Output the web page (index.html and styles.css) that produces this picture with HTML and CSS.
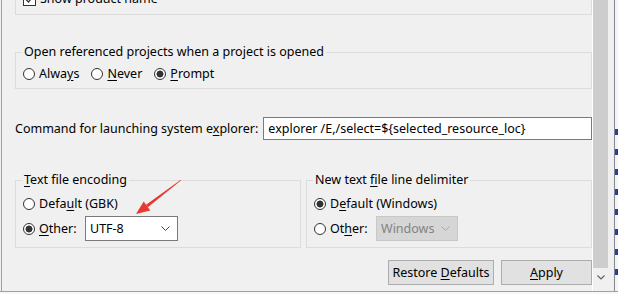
FILE: index.html
```html
<!DOCTYPE html>
<html lang="en">
<head>
    <meta charset="UTF-8">
    <meta name="viewport" content="width=device-width, initial-scale=1.0">
    <title>Workspace Preferences</title>
    <link rel="stylesheet" href="styles.css">
</head>
<body>

    <div class="window">
        <!-- Preference page -->
        <div class="panel">

            <div class="group group-cut">
                <label class="check-row"><span class="checkbox"><svg width="11" height="11" viewBox="0 0 11 11"><polyline points="2,5.5 4.5,8 9,2.5" fill="none" stroke="#333" stroke-width="1.3"/></svg></span><span>Show product name</span></label>
            </div>

            <fieldset class="group refs">
                <legend>Open referenced projects when a project is opened</legend>
                <div class="radio-row">
                    <label class="radio"><span class="circle"></span><span>Alwa<u>y</u>s</span></label>
                    <label class="radio"><span class="circle"></span><span><u>N</u>ever</span></label>
                    <label class="radio"><span class="circle checked"></span><span><u>P</u>rompt</span></label>
                </div>
            </fieldset>

            <div class="command-row">
                <label class="command-label">Command for launching system e<u>x</u>plorer:</label>
                <div class="textbox">explorer /E,/select=${selected_resource_loc}</div>
            </div>

            <div class="group-pair">
                <fieldset class="group">
                    <legend><u>T</u>ext file encoding</legend>
                    <div class="options">
                        <label class="radio"><span class="circle"></span><span>Defa<u>u</u>lt (GBK)</span></label>
                        <div class="other-row">
                            <label class="radio"><span class="circle checked"></span><span><u>O</u>ther:</span></label>
                            <div class="combo">UTF-8<svg class="chev" width="9" height="5" viewBox="0 0 9 5"><polyline points="0.5,0.5 4.5,4.5 8.5,0.5" fill="none" stroke="#444" stroke-width="1"/></svg></div>
                        </div>
                    </div>
                </fieldset>

                <fieldset class="group">
                    <legend>New text <u>f</u>ile line delimiter</legend>
                    <div class="options">
                        <label class="radio"><span class="circle checked"></span><span>D<u>e</u>fault (Windows)</span></label>
                        <div class="other-row">
                            <label class="radio"><span class="circle"></span><span>Ot<u>h</u>er:</span></label>
                            <div class="combo disabled">Windows<svg class="chev" width="9" height="5" viewBox="0 0 9 5"><polyline points="0.5,0.5 4.5,4.5 8.5,0.5" fill="none" stroke="#a8a8a8" stroke-width="1"/></svg></div>
                        </div>
                    </div>
                </fieldset>
            </div>

            <div class="buttons">
                <button class="btn restore">Restore <u>D</u>efaults</button>
                <button class="btn apply"><u>A</u>pply</button>
            </div>
        </div>

        <!-- Scroll bar -->
        <div class="scrollbar">
            <div class="thumb"></div>
            <div class="scroll-arrow"><svg width="8" height="5" viewBox="0 0 8 5"><polyline points="0.5,0.5 4,4 7.5,0.5" fill="none" stroke="#606060" stroke-width="1.2"/></svg></div>
        </div>
        <div class="gutter"></div>
        <div class="side"><div class="side-icons"></div></div>
    </div>

    <!-- Red annotation arrow -->
    <svg class="annotation" width="618" height="294" viewBox="0 0 618 294">
        <polygon points="181.2,180.2 180.8,179.8 146.1,204.8 147.9,207.2" fill="#e8382f"/>
        <polygon points="136,214 150.3,210.4 143.7,201.6" fill="#e8382f"/>
    </svg>

</body>
</html>
```

FILE: styles.css
```css
/* Reset */
* {
    box-sizing: border-box;
}

body {
    margin: 0;
    width: 618px;
    height: 294px;
    overflow: hidden;
    background-color: #f7f7f7;
    font-family: "Noto Sans", "Open Sans", sans-serif;
    font-size: 12.5px;
    line-height: 16px;
    color: #000;
}

u {
    text-underline-offset: 2px;
}

/* Outer frame */
.window {
    display: flex;
    height: 292px;
    background-color: #f0f0f0;
    border-bottom: 1px solid #a0a0a0;
}

.panel {
    width: 591px;
    flex-shrink: 0;
    margin-left: 1px;
    border-left: 1px solid #a0a0a0;
    padding-left: 13px;
    display: flex;
    flex-direction: column;
}

/* Group boxes */
.group {
    margin: 0;
    padding: 6px 7px 7px;
    border: 1px solid #dcdcdc;
    min-width: 0;
}

.group legend {
    padding: 0 2px;
    margin-left: -1px;
    line-height: 16px;
}

.group-cut {
    height: 15px;
    padding: 0 7px;
    border-top: none;
    overflow: hidden;
}

.check-row {
    display: flex;
    align-items: center;
    gap: 4px;
    height: 16px;
    margin-top: -9px;
}

.checkbox {
    width: 13px;
    height: 13px;
    border: 1px solid #333;
    background-color: #fff;
    display: flex;
    align-items: center;
    justify-content: center;
}

.refs {
    margin-top: 29px;
    padding-bottom: 6px;
}

.radio-row {
    display: flex;
    gap: 12px;
}

.radio {
    display: inline-flex;
    align-items: center;
    gap: 4px;
    height: 16px;
    white-space: nowrap;
}

.circle {
    width: 12px;
    height: 12px;
    border: 1px solid #333;
    border-radius: 50%;
    background-color: #fff;
}

.circle.checked {
    background: radial-gradient(circle, #333 0 3.2px, #fff 3.8px);
}

/* Command row */
.command-row {
    margin-top: 28px;
    display: flex;
    align-items: center;
}

.command-label {
    margin-right: 5px;
    white-space: nowrap;
}

.textbox {
    flex: 1;
    height: 23px;
    border: 1px solid #7a7a7a;
    background-color: #fff;
    padding: 0 4px;
    line-height: 21px;
    white-space: nowrap;
}

/* Encoding / delimiter */
.group-pair {
    margin-top: 32px;
    display: grid;
    grid-template-columns: 1fr 1fr;
    gap: 5px;
}

.group-pair .group {
    padding: 8px 7px 6px;
}

.options {
    display: flex;
    flex-direction: column;
    gap: 4px;
}

.other-row {
    display: grid;
    grid-template-columns: 62px auto;
    align-items: center;
}

.combo {
    width: 93px;
    height: 25px;
    border: 1px solid #7a7a7a;
    background-color: #fff;
    padding: 0 4px;
    display: flex;
    align-items: center;
    justify-content: space-between;
}

.combo .chev {
    margin-right: 3px;
}

.combo.disabled {
    width: 82px;
    background-color: #d6d6d6;
    border-color: #c8c8c8;
    color: #838383;
}

/* Buttons */
.buttons {
    margin-top: 12px;
    display: flex;
    justify-content: flex-end;
    gap: 7px;
}

.btn {
    height: 25px;
    background-color: #e1e1e1;
    border: 1px solid #adadad;
    font: inherit;
    color: #000;
    padding: 0;
}

.restore {
    width: 106px;
}

.apply {
    width: 91px;
}

/* Scroll bar and right edge */
.scrollbar {
    width: 16px;
    flex-shrink: 0;
    border-left: 1px solid #fff;
    display: flex;
    flex-direction: column;
}

.thumb {
    height: 268px;
    flex-shrink: 0;
    background-color: #cdcdcd;
}

.scroll-arrow {
    height: 19px;
    display: flex;
    align-items: center;
    justify-content: center;
}

.gutter {
    width: 7px;
    flex-shrink: 0;
    border-right: 1px solid #828790;
}

.side {
    flex: 1;
    background-color: #f4f4f4;
}

.side-icons {
    margin-top: 126px;
    height: 160px;
    background: repeating-linear-gradient(to bottom, transparent 0 3px, #2f3f8f 3px 9px, transparent 9px 20px);
}

/* Annotation overlay */
.annotation {
    position: absolute;
    left: 0;
    top: 0;
    pointer-events: none;
}
```
